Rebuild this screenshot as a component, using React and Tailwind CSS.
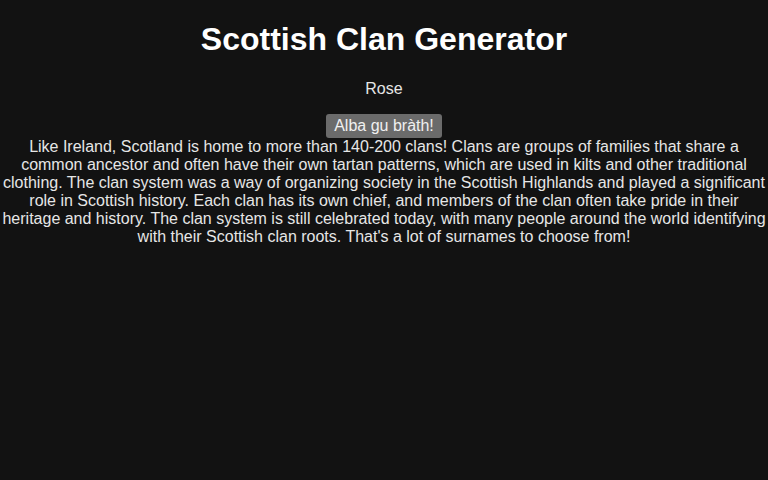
export default function App() {
  return (
    <div className="min-h-[480px] bg-[#121212] text-center font-['Liberation_Sans',Arial,sans-serif] text-[#e6e6e6]">
      <div className="pt-[21px]">
        <h1 className="text-[32px] font-bold leading-[37px] text-white">
          Scottish Clan Generator
        </h1>
        <p className="mt-[22px] text-base leading-[18px]">Rose</p>

        <div className="mt-4 flex justify-center">
          <button className="rounded-[3px] bg-[#6b6b6b] px-2 py-[3px] text-base leading-[18px] text-[#f0f0f0]">
            Alba gu bràth!
          </button>
        </div>

        <p className="text-base leading-[18px]">
          Like Ireland, Scotland is home to more than 140-200 clans! Clans are groups of families that share a
          common ancestor and often have their own tartan patterns, which are used in kilts and other traditional
          clothing. The clan system was a way of organizing society in the Scottish Highlands and played a significant
          role in Scottish history. Each clan has its own chief, and members of the clan often take pride in their
          heritage and history. The clan system is still celebrated today, with many people around the world identifying
          with their Scottish clan roots. That's a lot of surnames to choose from!
        </p>
      </div>
    </div>
  );
}
